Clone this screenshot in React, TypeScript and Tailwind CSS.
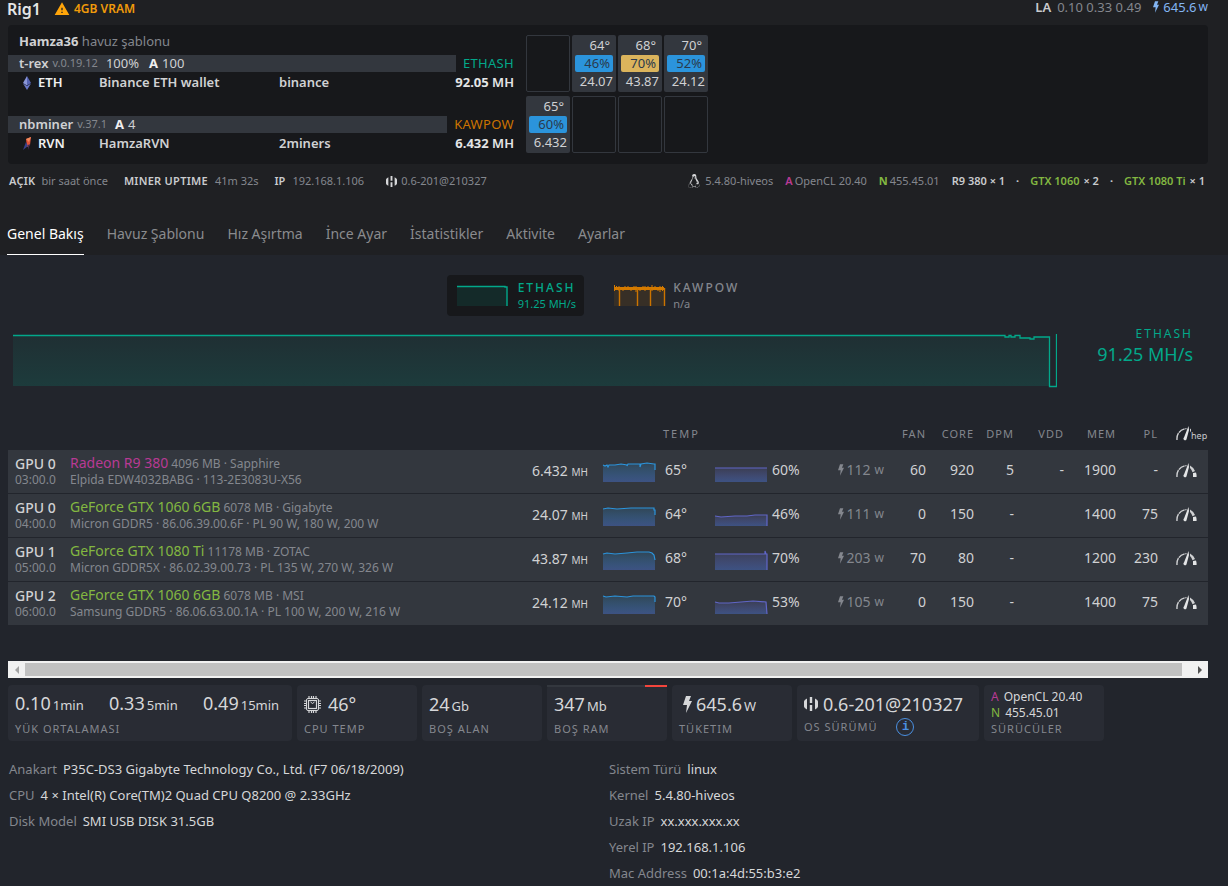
import type { ReactNode } from "react";
import clsx from "clsx";
import { FaLinux } from "react-icons/fa";
import { MdWarning } from "react-icons/md";

function Bolt({ className }: { className?: string }) {
  return (
    <svg viewBox="0 0 9 17" className={className} fill="currentColor" aria-hidden="true">
      <path d="M3 0H8L6 5H9L3 17L4 9H0Z" />
    </svg>
  );
}

function Hive({ className }: { className?: string }) {
  return (
    <svg viewBox="0 0 14 14" className={className} fill="currentColor" aria-hidden="true">
      <path d="M0 4.500Q0 3 3 1.500V12.500Q0 11 0 9.500ZM14 4.500Q14 3 11 1.500V12.500Q14 11 14 9.500Z" />
      <path d="M5.800 0H8.200V6H5.800ZM5.800 8H8.200V14H5.800Z" />
    </svg>
  );
}

function Gauge({ className }: { className?: string }) {
  return (
    <svg viewBox="0 0 21 15" className={clsx("h-[15px] w-[21px] shrink-0", className)} fill="none" aria-hidden="true">
      <path d="M1 14C0.500 8 4 3 10.500 2.600" stroke="#d0d1d3" strokeWidth="1.400" strokeDasharray="7 0.800" />
      <path d="M12.500 0L13 4L10.600 13A1.600 1.600 0 1 1 8 11.500Z" fill="#e4e5e6" />
      <path d="M14 2.500Q17 4 19 8L16.500 9.200Q15.500 6.500 14 5Z" fill="#d0d1d3" />
      <path d="M17 10L20 9.500Q20.800 12 20.600 14H17Z" fill="#e4e5e6" />
    </svg>
  );
}

function Chip() {
  return (
    <svg viewBox="0 0 17 17" className="size-[17px]" fill="none" stroke="#d6d7d9" aria-hidden="true">
      <rect x="2.500" y="2.500" width="12" height="12" rx="1.500" strokeWidth="1" />
      <rect x="4.500" y="4.500" width="8" height="8" strokeWidth="1.200" />
      <path d="M6.500 6L8.500 7.500L10.500 6" />
      <path
        d="M5 0V2M7.500 0V2M9.500 0V2M12 0V2M5 15V17M7.500 15V17M9.500 15V17M12 15V17M0 5H2M0 7.500H2M0 9.500H2M0 12H2M15 5H17M15 7.500H17M15 9.500H17M15 12H17"
        strokeWidth="1.200"
      />
    </svg>
  );
}

function EthLogo() {
  return (
    <svg viewBox="0 0 10 14" className="h-3.5 w-2.5" aria-hidden="true">
      <path d="M5 0L1 7L5 9.500Z" fill="#8a96d8" />
      <path d="M5 0L9 7L5 9.500Z" fill="#5563b4" />
      <path d="M1 7.500L5 10L9 7.500L5 14Z" fill="#6a78c8" />
    </svg>
  );
}

function RvnLogo() {
  return (
    <svg viewBox="0 0 10 14" className="h-3.5 w-2.5" aria-hidden="true">
      <path d="M4 2L9 0L8 8L5 10Z" fill="#e2533a" />
      <path d="M4 2L9 0L7 5Z" fill="#f08a5c" />
      <path d="M4 5L6 9L1 13Z" fill="#38408a" />
      <path d="M6 8L8 7L6 13Z" fill="#4a2b50" />
    </svg>
  );
}

const tempLines = [
  "0,2 2,3 4,2 5,4 6,2 12,2 18,1 24,2 24,3 25,1 37,1 37,4 38,1 44,0 51,1 52,1 52,7",
  "0,2 5,1 14,2 28,1 40,1 51,1 51,3 52,3 52,8",
  "0,3 4,2 12,3 24,2 34,1 46,1 49,2 51,4 52,9",
  "0,1 3,2 12,1 24,2 30,1 44,1 51,1 52,2 52,7",
];
const fanLines = ["0,5 52,5", "0,9 6,10 20,9 32,9 40,8 52,8 52,19", "0,3 50,3 50,0 51,3 52,3 52,19", "0,7 4,8 14,8 26,7 38,6 51,7 52,19"];

function Sparkline({ points, stroke, fill }: { points: string; stroke: string; fill: string }) {
  return (
    <svg viewBox="0 0 52 19" className="block h-[19px] w-[52px] overflow-visible" aria-hidden="true">
      <defs>
        <linearGradient id={fill} x1="0" y1="0" x2="0" y2="1">
          <stop offset="0" stopColor={stroke} stopOpacity="0.15" />
          <stop offset="1" stopColor="#4464b0" stopOpacity="0.6" />
        </linearGradient>
      </defs>
      <polygon points={`0,19 ${points} 52,19`} fill={`url(#${fill})`} />
      <polyline points={points} fill="none" stroke={stroke} strokeWidth="1.2" />
    </svg>
  );
}

const miners = [
  { name: "t-rex", version: "v.0.19.12", ratio: "100%", accepted: "100", algo: "ETHASH", color: "text-[#02a88a]", coin: "ETH", icon: <EthLogo />, wallet: "Binance ETH wallet", pool: "binance", speed: "92.05" },
  { name: "nbminer", version: "v.37.1", ratio: "", accepted: "4", algo: "KAWPOW", color: "text-[#cc7400]", coin: "RVN", icon: <RvnLogo />, wallet: "HamzaRVN", pool: "2miners", speed: "6.432" },
];

const cells = [
  null,
  { temp: "64°", fan: "46%", speed: "24.07", bg: "bg-[#2b94dc]" },
  { temp: "68°", fan: "70%", speed: "43.87", bg: "bg-[#dbb45c]" },
  { temp: "70°", fan: "52%", speed: "24.12", bg: "bg-[#2b94dc]" },
  { temp: "65°", fan: "60%", speed: "6.432", bg: "bg-[#2b94dc]" },
  null,
  null,
  null,
];

const tabs = ["Genel Bakış", "Havuz Şablonu", "Hız Aşırtma", "İnce Ayar", "İstatistikler", "Aktivite", "Ayarlar"];

const gpus = [
  { id: "GPU 0", bus: "03:00.0", name: "Radeon R9 380", amd: true, info: "4096 MB · Sapphire", detail: "Elpida EDW4032BABG · 113-2E3083U-X56", hash: "6.432", temp: "65°", fan: "60%", watt: "112", set: ["60", "920", "5", "-", "1900", "-"] },
  { id: "GPU 0", bus: "04:00.0", name: "GeForce GTX 1060 6GB", info: "6078 MB · Gigabyte", detail: "Micron GDDR5 · 86.06.39.00.6F · PL 90 W, 180 W, 200 W", hash: "24.07", temp: "64°", fan: "46%", watt: "111", set: ["0", "150", "-", "", "1400", "75"] },
  { id: "GPU 1", bus: "05:00.0", name: "GeForce GTX 1080 Ti", info: "11178 MB · ZOTAC", detail: "Micron GDDR5X · 86.02.39.00.73 · PL 135 W, 270 W, 326 W", hash: "43.87", temp: "68°", fan: "70%", watt: "203", set: ["70", "80", "-", "", "1200", "230"] },
  { id: "GPU 2", bus: "06:00.0", name: "GeForce GTX 1060 6GB", info: "6078 MB · MSI", detail: "Samsung GDDR5 · 86.06.63.00.1A · PL 100 W, 200 W, 216 W", hash: "24.12", temp: "70°", fan: "53%", watt: "105", set: ["0", "150", "-", "", "1400", "75"] },
];

function Header() {
  return (
    <header className="flex h-[25px] items-start justify-between pr-5 pl-[7px]">
      <div className="flex items-center">
        <h1 className="text-[16px] leading-[18px] font-semibold text-[#e4e5e6]">Rig1</h1>
        <MdWarning className="ml-[13px] size-4 text-[#ffa50a]" />
        <span className="ml-1 text-[12px] leading-[18px] font-semibold text-[#f09a0a]">4GB VRAM</span>
      </div>
      <div className="flex items-center text-[13px] leading-[14px] text-[#84878e]">
        <b className="mr-1.5 font-semibold text-[#c9cbce]">LA</b>0.10 0.33 0.49
        <span className="ml-3 flex items-center text-[#83b5f3]">
          <Bolt className="mr-1 h-3 w-1.5" />
          645.6<span className="ml-0.5 text-[12px]">w</span>
        </span>
      </div>
    </header>
  );
}

function MinerPanel() {
  return (
    <section className="mr-5 ml-2 flex h-[139px] gap-3 rounded bg-[#17181b] text-[13px] text-[#d0d1d3]">
      <div className="w-[506px] pt-2">
        <p className="mb-1.5 pl-[11px] leading-4 text-[#84878e]">
          <b className="font-bold text-[#d0d1d3]">Hamza36</b> havuz şablonu
        </p>
        {miners.map((m) => (
          <div key={m.name} className="mb-[23px]">
            <div className="flex h-[17px] items-center gap-[7px]">
              <div className="flex h-full flex-1 items-center bg-[#33373e] pb-0.5 pl-[11px] leading-4">
                <b className="mr-1 font-semibold">{m.name}</b>
                <span className="mr-2 text-[11px] text-[#84878e]">{m.version}</span>
                {m.ratio && <span className="mr-2.5">{m.ratio}</span>}
                <b className="mr-1 font-bold text-[#f0f0f0]">A</b>
                {m.accepted}
              </div>
              <span className={clsx("tracking-wide", m.color)}>{m.algo}</span>
            </div>
            <div className="flex h-[21px] items-center pl-3.5 font-semibold">
              {m.icon}
              <span className="ml-1.5 w-[61px] text-[#f0f0f0]">{m.coin}</span>
              <span className="w-[180px]">{m.wallet}</span>
              <span>{m.pool}</span>
              <span className="ml-auto text-[#e4e5e6]">
                <b className="font-bold">{m.speed}</b> MH
              </span>
            </div>
          </div>
        ))}
      </div>
      <div className="grid auto-rows-[57px] grid-cols-[repeat(4,44px)] gap-x-0.5 gap-y-1 pt-2.5">
        {cells.map((c, i) =>
          c ? (
            <div key={i} className="rounded-xs bg-[#33373e] px-[3px] pt-0.5 text-right leading-[17px]">
              <div className="pr-[3px] pb-0.5 leading-4">{c.temp}</div>
              <div className={clsx("rounded-xs pr-[3px] text-[#2a3a4c]", c.bg)}>{c.fan}</div>
              <div className="leading-[18px]">{c.speed}</div>
            </div>
          ) : (
            <div key={i} className="rounded-xs border border-[#33373e]" />
          ),
        )}
      </div>
    </section>
  );
}

function MetaRow() {
  return (
    <div className="mr-5 ml-2 flex h-[34px] items-center justify-between pr-[3px] pl-px text-[11px] whitespace-nowrap text-[#84878e]">
      <div className="flex items-center">
        <b className="mr-1.5 font-semibold tracking-wide text-[#c9cbce]">AÇIK</b>bir saat önce
        <b className="mr-[7px] ml-4 font-semibold tracking-wide text-[#c9cbce]">MINER UPTIME</b>41m 32s
        <b className="mr-[7px] ml-4 font-semibold text-[#c9cbce]">IP</b>192.168.1.106
        <Hive className="mr-1 ml-[22px] size-[11px] text-[#d6d7d9]" />
        0.6-201@210327
      </div>
      <div className="flex items-center">
        <FaLinux className="mr-1 size-3.5 text-[#d6d7d9]" />
        5.4.80-hiveos
        <b className="mr-0.5 ml-3 font-semibold text-[#b83a94]">A</b>OpenCL 20.40
        <b className="mr-0.5 ml-3 font-bold text-[#83b841]">N</b>455.45.01
        <b className="ml-3 font-semibold text-[#c9cbce]">R9 380 × 1</b>
        <b className="mx-[11px] text-[#c9cbce]">·</b>
        <b className="font-semibold text-[#83b841]">GTX 1060</b>
        <b className="ml-1 font-semibold text-[#c9cbce]">× 2</b>
        <b className="mx-[11px] text-[#c9cbce]">·</b>
        <b className="font-semibold text-[#83b841]">GTX 1080 Ti</b>
        <b className="ml-1 font-semibold text-[#c9cbce]">× 1</b>
      </div>
    </div>
  );
}

function AlgoSwitch() {
  return (
    <div className="flex justify-center gap-[22px] pt-5 pr-[34px]">
      <button type="button" className="flex h-[41px] items-center gap-2.5 rounded bg-[#17181b] px-2.5 pr-2 text-left text-[#02a88a]">
        <svg viewBox="0 0 51 21" className="h-[21px] w-[51px]" aria-hidden="true">
          <path d="M0 21V1H50V21Z" fill="#02a88a" fillOpacity="0.13" />
          <path d="M0 1.500H48V2H50V21" fill="none" stroke="#02a88a" strokeWidth="1.400" />
        </svg>
        <span>
          <span className="block text-[12px] leading-4 font-medium tracking-[2px]">ETHASH</span>
          <span className="block text-[11px] leading-4">91.25 MH/s</span>
        </span>
      </button>
      <button type="button" className="flex h-[41px] items-center gap-2 px-2 text-left text-[#84878e]">
        <svg viewBox="0 0 51 21" className="h-[21px] w-[51px] overflow-visible" fill="none" aria-hidden="true">
          <path d="M0 3H50V21H0Z" fill="#cc7400" fillOpacity="0.13" />
          <path d="M0 3.500H50" stroke="#d47a00" strokeWidth="3" />
          <path
            d="M0.500 0V6M2.500 1V5M5 1V6M9 2V6M11 1V5M14 1V5M17 2V6M20 1V5M22 1V7M26 2V6M29 1V5M31 1V6M34 1V5M38 0V6M41 1V5M44 2V6M46 1V7M48.500 1V6"
            stroke="#d47a00"
          />
          <path d="M5.500 3V21M23.500 3V21M36.500 3V21M50.500 3V21" stroke="#cc7400" strokeWidth="1.400" />
        </svg>
        <span>
          <span className="block text-[12px] leading-4 font-medium tracking-[2px]">KAWPOW</span>
          <span className="block text-[11px] leading-4">n/a</span>
        </span>
      </button>
    </div>
  );
}

function HashChart() {
  return (
    <div className="flex pt-[11px] pr-[35px] pl-[13px] text-[#02a88a]">
      <svg viewBox="0 0 1044 54" preserveAspectRatio="none" className="mt-[7px] h-[54px] flex-1" aria-hidden="true">
        <defs>
          <linearGradient id="hash" x1="0" y1="0" x2="0" y2="1">
            <stop offset="0" stopColor="#02a88a" stopOpacity="0.08" />
            <stop offset="1" stopColor="#02a88a" stopOpacity="0.17" />
          </linearGradient>
        </defs>
        <path d="M0 52V2H992L1006 3L1036 3V52Z" fill="url(#hash)" />
        <path
          d="M0 1.500H992V3H996V1.500H998V3H1002V1.500H1007V4H1017V5H1021V3H1036.500V52.500H1043.500V0"
          fill="none"
          stroke="#02a88a"
          strokeWidth="1.300"
          vectorEffect="non-scaling-stroke"
        />
      </svg>
      <div className="w-[136px] text-right">
        <div className="text-[12px] leading-[14px] tracking-[2px]">ETHASH</div>
        <div className="text-[18px] leading-[26px]">91.25 MH/s</div>
      </div>
    </div>
  );
}

function GpuTable() {
  return (
    <div className="mr-5 ml-2 pt-[30px]">
      <table className="w-full table-fixed border-separate border-spacing-0 text-right text-[14px] whitespace-nowrap text-[#d0d1d3]">
        <colgroup>
          <col className="w-[62px]" />
          <col />
          <col className="w-[70px]" />
          <col className="w-[67px]" />
          <col className="w-[60px]" />
          <col className="w-[52px]" />
          <col className="w-[53px]" />
          <col className="w-[64px]" />
          <col className="w-[42px]" />
          <col className="w-[48px]" />
          <col className="w-[40px]" />
          <col className="w-[50px]" />
          <col className="w-[52px]" />
          <col className="w-[42px]" />
          <col className="w-[50px]" />
        </colgroup>
        <thead>
          <tr className="h-8 text-[11px] tracking-[1px] text-[#84878e]">
            <th colSpan={4} />
            <th className="pl-2 text-left font-normal tracking-[2px]">TEMP</th>
            <th colSpan={3} />
            {["FAN", "CORE", "DPM", "VDD", "MEM", "PL"].map((h) => (
              <th key={h} className="font-normal">{h}</th>
            ))}
            <th className="pl-[18px] font-normal tracking-normal text-[#c9cbce]">
              <span className="flex items-center">
                <Gauge className="mb-0.5" />
                <span className="-ml-1.5 bg-[#22252c] pt-1 text-[9px] leading-3">hep</span>
              </span>
            </th>
          </tr>
        </thead>
        <tbody>
          {gpus.map((g, i) => (
            <tr key={g.bus} className="h-11 bg-[#33373e] [&>td]:border-b [&>td]:border-[#22252c]">
              <td className="pl-[7px] text-left leading-4">
                <div className="font-medium">{g.id}</div>
                <div className="text-[12px] text-[#84878e]">{g.bus}</div>
              </td>
              <td className="text-left text-[12px] leading-4 text-[#84878e]">
                <div>
                  <span className={clsx("text-[14px]", g.amd ? "text-[#b83a94]" : "text-[#83b841]")}>{g.name}</span> {g.info}
                </div>
                <div>{g.detail}</div>
              </td>
              <td className="pb-[3px]">
                {g.hash} <span className="text-[10px]">MH</span>
              </td>
              <td className="pt-0.5 pl-[15px]">
                <Sparkline points={tempLines[i]} stroke="#2b94dc" fill={`temp${i}`} />
              </td>
              <td className="pb-1 pl-2.5 text-left">{g.temp}</td>
              <td className="pt-0.5">
                <Sparkline points={fanLines[i]} stroke="#6066c8" fill={`fan${i}`} />
              </td>
              <td className="pb-1 pl-[5px] text-left">{g.fan}</td>
              <td className="pb-[3px] text-[#84878e]">
                <span className="inline-flex items-center">
                  <Bolt className="mr-[3px] h-3 w-1.5" />
                  {g.watt}
                  <span className="ml-1 text-[12px]">w</span>
                </span>
              </td>
              {g.set.map((v, k) => (
                <td key={k} className="pb-1">{v}</td>
              ))}
              <td className="pb-0.5 pl-[18px]">
                <Gauge />
              </td>
            </tr>
          ))}
        </tbody>
      </table>
    </div>
  );
}

function ScrollBar() {
  return (
    <div className="mt-[35px] mr-5 ml-2 flex h-[17px] bg-[#f1f1f1]">
      <button type="button" aria-label="Sola kaydır" className="flex w-[17px] items-center justify-center text-[#a3a3a3]">
        <svg viewBox="0 0 4 8" className="h-2 w-1" fill="currentColor"><path d="M4 0V8L0 4Z" /></svg>
      </button>
      <div className="my-0.5 flex-1 bg-[#c1c1c1]" />
      <button type="button" aria-label="Sağa kaydır" className="ml-[9px] flex w-[17px] items-center justify-center text-[#505050]">
        <svg viewBox="0 0 4 8" className="h-2 w-1" fill="currentColor"><path d="M0 0V8L4 4Z" /></svg>
      </button>
    </div>
  );
}

function Card({ label, width, children }: { label: string; width: string; children: ReactNode }) {
  return (
    <div className={clsx("h-14 shrink-0 rounded bg-[#292c34] pt-1.5 pl-[7px]", width)}>
      <div className="flex h-[26px] items-center text-[18px] leading-[26px]">{children}</div>
      <div className="text-[11px] leading-6 tracking-[1px] text-[#84878e]">{label}</div>
    </div>
  );
}

function Unit({ children }: { children: ReactNode }) {
  return <span className="ml-0.5 pt-1 text-[13px]">{children}</span>;
}

function Stats() {
  return (
    <div className="mt-[7px] ml-2 flex gap-[5px] whitespace-nowrap text-[#d6d7d9]">
      <Card label="YÜK ORTALAMASI" width="w-[284px]">
        <span className="w-[94px]">0.10<Unit>1min</Unit></span>
        <span className="w-[94px]">0.33<Unit>5min</Unit></span>
        <span>0.49<Unit>15min</Unit></span>
      </Card>
      <Card label="CPU TEMP" width="w-[120px]">
        <Chip />
        <span className="ml-[7px]">46°</span>
      </Card>
      <Card label="BOŞ ALAN" width="w-[120px]">
        24<Unit>Gb</Unit>
      </Card>
      <div className="relative">
        <Card label="BOŞ RAM" width="w-[120px]">
          347<Unit>Mb</Unit>
        </Card>
        <div className="absolute inset-x-0 top-0 flex h-0.5 justify-end bg-[#33373e]">
          <div className="w-[22px] bg-[#f4453c]" />
        </div>
      </div>
      <Card label="TÜKETIM" width="w-[120px]">
        <Bolt className="mr-1 ml-1 h-[17px] w-[9px]" />
        645.6<Unit>W</Unit>
      </Card>
      <div className="h-14 w-[182px] shrink-0 rounded bg-[#292c34] pt-1.5 pl-[7px]">
        <div className="flex h-[26px] items-center text-[18px]">
          <Hive className="mr-[5px] size-3.5" />
          0.6-201@210327
        </div>
        <div className="flex items-center pt-px text-[11px] leading-[18px] tracking-[1px] text-[#84878e]">
          OS SÜRÜMÜ
          <button
            type="button"
            aria-label="Bilgi"
            className="ml-[19px] size-[18px] rounded-full border border-[#4a90e2] text-center font-['Liberation_Mono'] text-[12px] leading-4 font-bold tracking-normal text-[#4a90e2]"
          >
            i
          </button>
        </div>
      </div>
      <div className="h-14 w-[120px] shrink-0 rounded bg-[#292c34] pt-1 pl-[7px] text-[12px] leading-4">
        <div><span className="mr-[5px] text-[#b83a94]">A</span>OpenCL 20.40</div>
        <div><span className="mr-[5px] text-[#83b841]">N</span>455.45.01</div>
        <div className="text-[11px] tracking-[1px] text-[#84878e]">SÜRÜCÜLER</div>
      </div>
    </div>
  );
}

function Detail({ label, value }: { label: string; value: string }) {
  return (
    <div className="flex gap-1.5">
      <dt className="text-[#84878e]">{label}</dt>
      <dd>{value}</dd>
    </div>
  );
}

export default function App() {
  return (
    <main className="min-h-screen bg-[#22252c] font-['Noto_Sans',sans-serif] text-[#d6d7d9]">
      <div className="bg-[#1f2023]">
        <Header />
        <MinerPanel />
        <MetaRow />
        <nav className="flex h-[57px] gap-[23px] pl-[7px] text-[14px]">
          {tabs.map((t, i) => (
            <a
              key={t}
              href="#"
              className={clsx("border-b pt-[25px] leading-[22px]", i === 0 ? "border-white text-white" : "border-transparent text-[#8a8b8e]")}
            >
              {t}
            </a>
          ))}
        </nav>
      </div>
      <AlgoSwitch />
      <HashChart />
      <GpuTable />
      <ScrollBar />
      <Stats />
      <div className="grid grid-cols-[600px_1fr] pt-[15px] pl-[9px] text-[13px] leading-[26px]">
        <dl>
          <Detail label="Anakart" value="P35C-DS3 Gigabyte Technology Co., Ltd. (F7 06/18/2009)" />
          <Detail label="CPU" value="4 × Intel(R) Core(TM)2 Quad CPU Q8200 @ 2.33GHz" />
          <Detail label="Disk Model" value="SMI USB DISK 31.5GB" />
        </dl>
        <dl>
          <Detail label="Sistem Türü" value="linux" />
          <Detail label="Kernel" value="5.4.80-hiveos" />
          <Detail label="Uzak IP" value="xx.xxx.xxx.xx" />
          <Detail label="Yerel IP" value="192.168.1.106" />
          <Detail label="Mac Address" value="00:1a:4d:55:b3:e2" />
        </dl>
      </div>
    </main>
  );
}
